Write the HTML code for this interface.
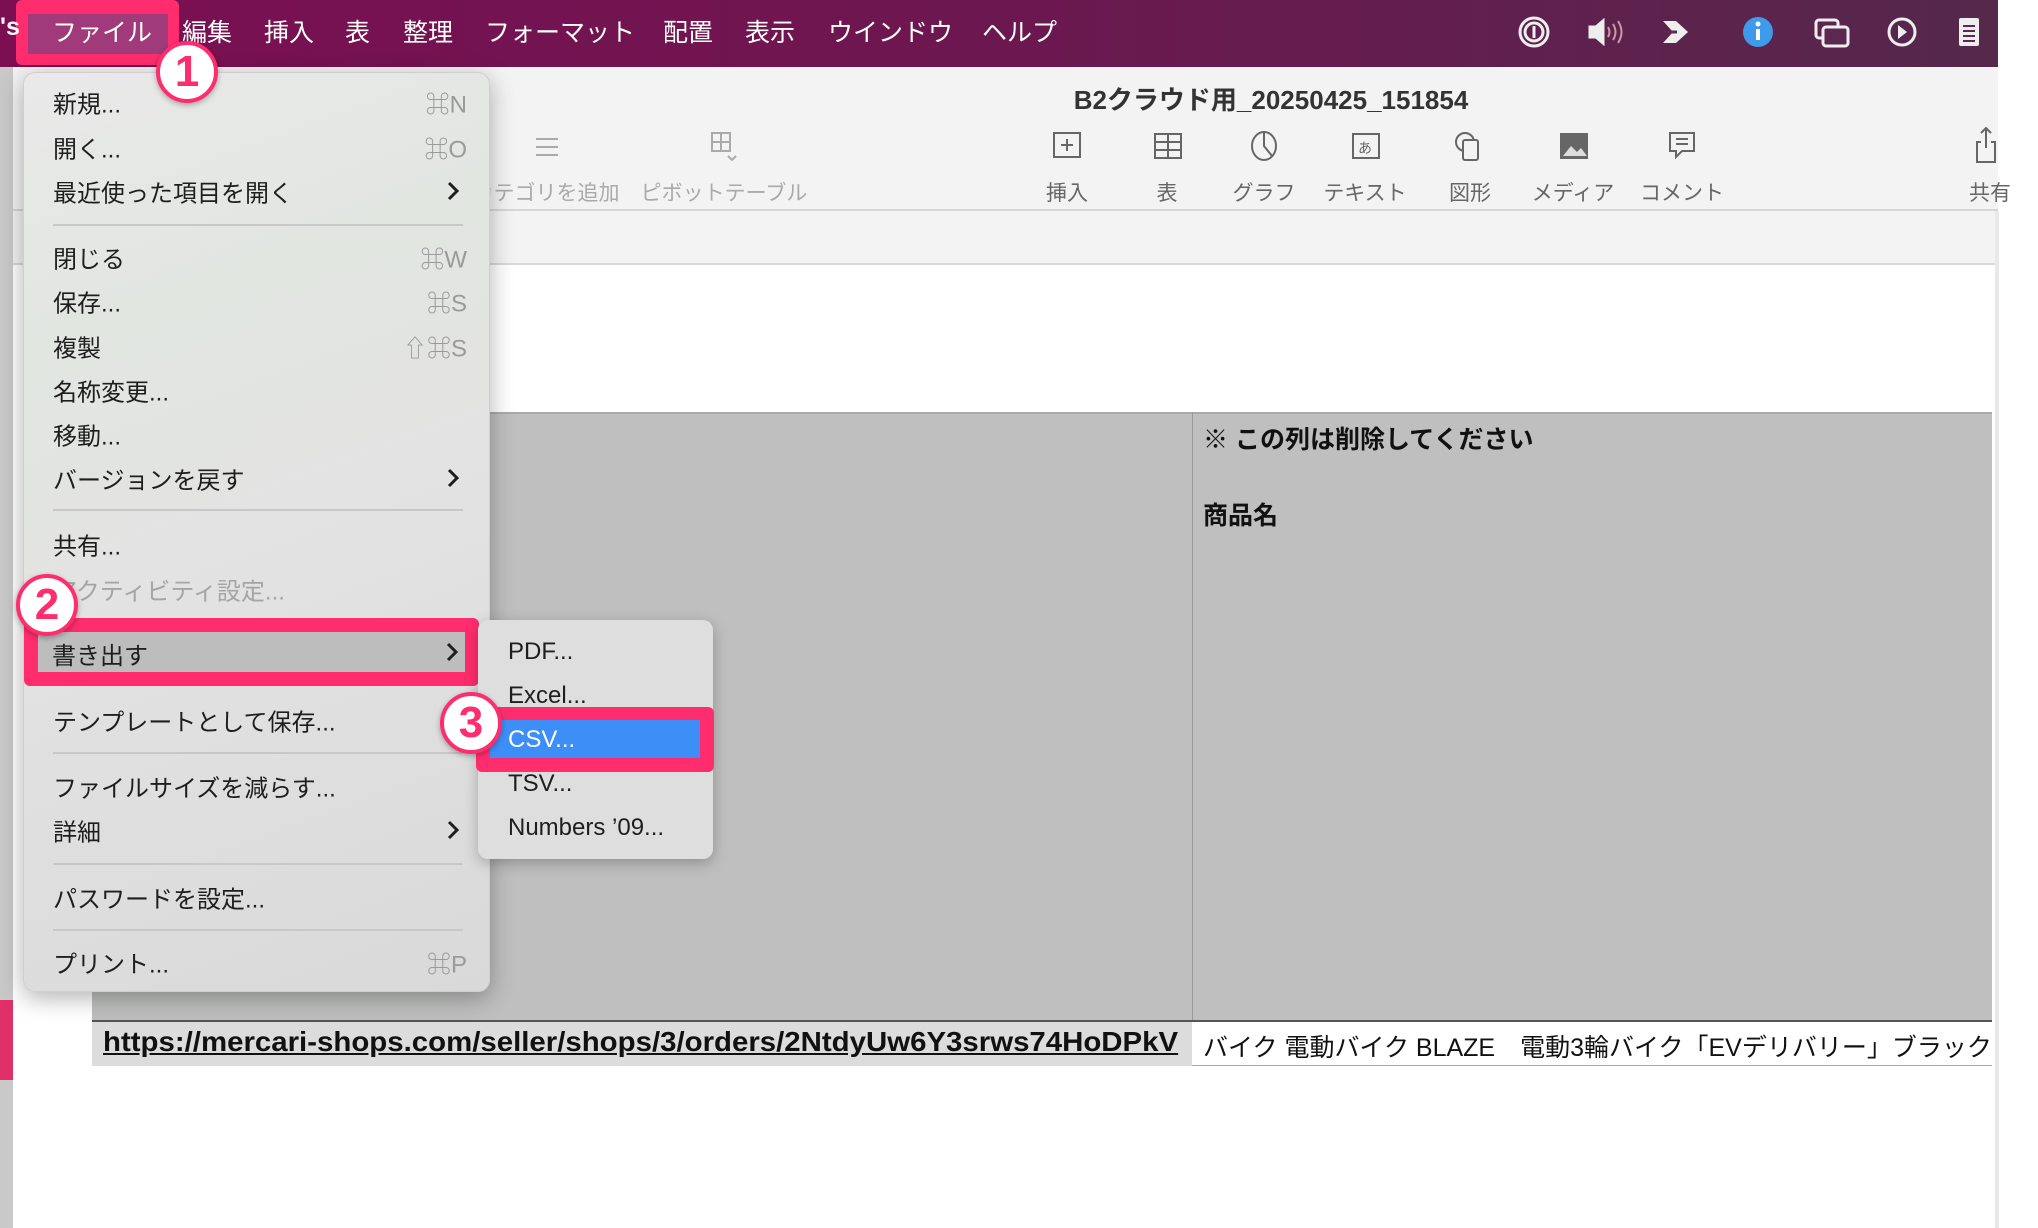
<!DOCTYPE html>
<html><head><meta charset="utf-8"><style>
*{margin:0;padding:0;box-sizing:border-box}
body{width:2038px;height:1228px;position:relative;overflow:hidden;background:#fff;font-family:"Liberation Sans","Noto Sans CJK JP",sans-serif}
.a{position:absolute}
.mb{left:0;top:0;width:1998px;height:67px;background:linear-gradient(90deg,#7b0f52 0%,#6e1650 45%,#55284c 100%)}
.mi{position:absolute;top:13px;color:#fff;font-size:25px;white-space:nowrap}
.win{left:13px;top:67px;width:1985px;height:1161px;background:#fff}
.menu{left:23px;top:72px;width:467px;height:920px;background:linear-gradient(160deg,#e9e9e9 0%,#e2e6e1 25%,#e3e3e3 50%,#d9d9d9 100%);border-radius:12px;box-shadow:0 6px 24px rgba(0,0,0,.3);border:1px solid #cfcfcf}
.it{position:absolute;left:29px;font-size:24px;color:#1e1e1e;white-space:nowrap;transform:translateY(-50%)}
.sc{position:absolute;right:22px;width:140px;text-align:right;font-size:24px;color:#9a9a9a;transform:translateY(-50%)}
.sep{position:absolute;left:29px;width:410px;height:2px;background:#c8c8c8}
.chev{position:absolute;left:422px;width:14px;height:22px;transform:translateY(-50%)}
.circ{position:absolute;width:62px;height:62px;border-radius:50%;background:#fff;border:4px solid #ff2d6e;color:#ff2d6e;font-weight:bold;font-size:44px;text-align:center;line-height:54px;box-shadow:0 2px 6px rgba(0,0,0,.3)}
.tb{position:absolute;font-size:21px;color:#666;transform:translateX(-50%);white-space:nowrap}
</style></head><body>
<svg width="0" height="0" style="position:absolute"><defs><symbol id="cv" viewBox="0 0 14 22"><path d="M3 3l8 8-8 8" fill="none" stroke="#1e1e1e" stroke-width="3"/></symbol></defs></svg>
<div class="a" style="left:0;top:67px;width:13px;height:1161px;background:#c9c9c9"></div>
<div class="a" style="left:0;top:1000px;width:13px;height:80px;background:#e0306a"></div>
<div class="a mb"></div>
<div class="a" style="left:16px;top:0;width:163px;height:65px;background:#ff2d6e;border-radius:6px"></div>
<div class="a" style="left:28px;top:14px;width:140px;height:40px;background:#a03a7a"></div>
<div class="mi" style="left:0;font-weight:bold">'s</div>
<div class="mi" style="left:52px">ファイル</div>
<div class="mi" style="left:182px">編集</div>
<div class="mi" style="left:264px">挿入</div>
<div class="mi" style="left:345px">表</div>
<div class="mi" style="left:403px">整理</div>
<div class="mi" style="left:485px">フォーマット</div>
<div class="mi" style="left:663px">配置</div>
<div class="mi" style="left:745px">表示</div>
<div class="mi" style="left:828px">ウインドウ</div>
<div class="mi" style="left:982px">ヘルプ</div>
<svg class="a" style="left:1515px;top:12px" width="470" height="42" viewBox="1515 12 470 42" fill="none" stroke="#eee" stroke-width="3">
<circle cx="1534" cy="32" r="14"/><circle cx="1534" cy="32" r="9"/><line x1="1534" y1="26" x2="1534" y2="38"/>
<path d="M1590 27h6l7-6v22l-7-6h-6z" fill="#eee"/><path d="M1608 27q3 5 0 10M1613 24q5 8 0 16M1618 21q7 11 0 22" stroke="#c9a" stroke-width="2"/>
<path d="M1663 21h13l12 11-12 11h-13l10-11z" fill="#eee" stroke="none"/><path d="M1663 32h14" stroke="#5e2650" stroke-width="3"/>
<circle cx="1758" cy="32" r="15" fill="#3d9be9" stroke="none"/><rect x="1756" y="29" width="4" height="11" fill="#fff" stroke="none"/><circle cx="1758" cy="24" r="2.5" fill="#fff" stroke="none"/>
<rect x="1816" y="20" width="22" height="18" rx="3"/><rect x="1823" y="27" width="25" height="19" rx="3" fill="#5c2850"/>
<circle cx="1902" cy="32" r="13"/><path d="M1898 25l9 7-9 7z" fill="#eee" stroke="none"/>
<rect x="1959" y="18" width="20" height="28" rx="2" fill="#eee" stroke="none"/><path d="M1963 26h12M1963 31h12M1963 36h12M1963 41h12" stroke="#5c2850" stroke-width="2"/>
</svg>
<div class="a win"></div>
<div class="a" style="left:13px;top:67px;width:1985px;height:144px;background:#f3f3f3;border-bottom:2px solid #d6d6d6"></div>
<div class="a" style="left:13px;top:211px;width:1985px;height:54px;background:#f3f3f3;border-bottom:2px solid #d8d8d8"></div>
<div class="a" style="left:1998px;top:67px;width:40px;height:1161px;background:#fff"></div>
<div class="a" style="left:1995px;top:211px;width:4px;height:1017px;background:#e8e8e8"></div>
<div class="a" style="left:1271px;top:80px;transform:translateX(-50%);font-size:26px;font-weight:bold;color:#333;white-space:nowrap">B2クラウド用_20250425_151854</div>
<svg class="a" style="left:500px;top:126px" width="1510" height="40" viewBox="500 126 1510 40" fill="none" stroke="#666" stroke-width="2">
<path d="M536 139h22M536 147h22M536 155h22" stroke="#aaa"/>
<rect x="712" y="133" width="18" height="18" stroke="#aaa"/><path d="M712 142h18M721 133v18M728 156l4 4 4-4" stroke="#aaa"/>
<rect x="1054" y="133" width="26" height="24"/><path d="M1061 145h12M1067 139v12"/>
<rect x="1155" y="134" width="26" height="24"/><path d="M1155 142h26M1155 150h26M1168 134v24"/>
<ellipse cx="1264" cy="146" rx="12" ry="14"/><path d="M1264 132v14l8 10"/>
<rect x="1353" y="134" width="26" height="24"/><text x="1358" y="153" font-size="14" fill="#666" stroke="none">あ</text>
<circle cx="1465" cy="142" r="9"/><rect x="1463" y="140" width="15" height="20" rx="2" fill="#f3f3f3"/>
<rect x="1561" y="134" width="26" height="24" fill="#666"/><path d="M1563 156l8-10 6 6 4-4 6 8z" fill="#ddd" stroke="none"/>
<path d="M1670 133h24v18h-12l-6 6v-6h-6z"/><path d="M1676 139h12M1676 144h12"/>
<path d="M1981 142h-4v20h18v-20h-4M1986 128v20M1981 133l5-5 5 5"/>
</svg>
<div class="tb" style="left:546px;top:177px;color:#aaa">カテゴリを追加</div>
<div class="tb" style="left:724px;top:177px;color:#aaa">ピボットテーブル</div>
<div class="tb" style="left:1067px;top:177px">挿入</div>
<div class="tb" style="left:1167px;top:177px">表</div>
<div class="tb" style="left:1264px;top:177px">グラフ</div>
<div class="tb" style="left:1365px;top:177px">テキスト</div>
<div class="tb" style="left:1470px;top:177px">図形</div>
<div class="tb" style="left:1573px;top:177px">メディア</div>
<div class="tb" style="left:1682px;top:177px">コメント</div>
<div class="tb" style="left:1990px;top:177px">共有</div>
<div class="a" style="left:92px;top:412px;width:1900px;height:609px;background:#bebfbe;border-top:2px solid #aaa"></div>
<div class="a" style="left:1192px;top:412px;width:1px;height:654px;background:#999"></div>
<div class="a" style="left:1203px;top:420px;font-size:25px;font-weight:bold;color:#111">※ この列は削除してください</div>
<div class="a" style="left:1203px;top:496px;font-size:25px;font-weight:bold;color:#111">商品名</div>
<div class="a" style="left:92px;top:1020px;width:1900px;height:46px;border-top:2px solid #555;border-bottom:1px solid #aaa;background:#fff"></div>
<div class="a" style="left:92px;top:1022px;width:1100px;height:44px;background:#dcdcdc"></div>
<div class="a" style="left:103px;top:1026px;font-size:28px;font-weight:bold;color:#111;text-decoration:underline;white-space:nowrap;transform:scaleX(1.05);transform-origin:0 0">https://mercari-shops.com/seller/shops/3/orders/2NtdyUw6Y3srws74HoDPkV</div>
<div class="a" style="left:1203px;top:1028px;font-size:25px;color:#111;white-space:nowrap">バイク 電動バイク BLAZE　電動3輪バイク「EVデリバリー」ブラック</div>

<div class="a menu">
<div class="it" style="top:29px">新規...</div><div class="sc" style="top:29px">⌘N</div>
<div class="it" style="top:74px">開く...</div><div class="sc" style="top:74px">⌘O</div>
<div class="it" style="top:118px">最近使った項目を開く</div><svg class="chev" style="top:118px"><use href="#cv"/></svg>
<div class="sep" style="top:151px"></div>
<div class="it" style="top:184px">閉じる</div><div class="sc" style="top:184px">⌘W</div>
<div class="it" style="top:228px">保存...</div><div class="sc" style="top:228px">⌘S</div>
<div class="it" style="top:273px">複製</div><div class="sc" style="top:273px">⇧⌘S</div>
<div class="it" style="top:317px">名称変更...</div>
<div class="it" style="top:361px">移動...</div>
<div class="it" style="top:405px">バージョンを戻す</div><svg class="chev" style="top:405px"><use href="#cv"/></svg>
<div class="sep" style="top:436px"></div>
<div class="it" style="top:471px">共有...</div>
<div class="it" style="top:516px;color:#a5a5a5">アクティビティ設定...</div>
<div class="it" style="top:647px">テンプレートとして保存...</div>
<div class="sep" style="top:679px"></div>
<div class="it" style="top:713px">ファイルサイズを減らす...</div>
<div class="it" style="top:757px">詳細</div><svg class="chev" style="top:757px"><use href="#cv"/></svg>
<div class="sep" style="top:790px"></div>
<div class="it" style="top:824px">パスワードを設定...</div>
<div class="sep" style="top:856px"></div>
<div class="it" style="top:889px">プリント...</div><div class="sc" style="top:889px">⌘P</div>
</div>
<div class="a" style="left:24px;top:618px;width:455px;height:68px;background:#ff2d6e;border-radius:6px"></div>
<div class="a" style="left:38px;top:632px;width:427px;height:40px;background:#bdbdbd"></div>
<div class="a" style="left:52px;top:636px;font-size:24px;color:#1e1e1e">書き出す</div>
<svg class="a" style="left:445px;top:641px" width="14" height="22"><use href="#cv"/></svg>

<div class="a" style="left:478px;top:620px;width:235px;height:239px;background:#dedede;border-radius:10px;box-shadow:0 4px 14px rgba(0,0,0,.25)"></div>
<div class="a" style="left:508px;top:638px;font-size:24px;color:#1e1e1e">PDF...</div>
<div class="a" style="left:508px;top:682px;font-size:24px;color:#1e1e1e">Excel...</div>
<div class="a" style="left:476px;top:707px;width:238px;height:65px;background:#ff2d6e;border-radius:6px"></div>
<div class="a" style="left:490px;top:720px;width:210px;height:38px;background:#3e8ef7"></div>
<div class="a" style="left:508px;top:726px;font-size:24px;color:#fff">CSV...</div>
<div class="a" style="left:508px;top:770px;font-size:24px;color:#1e1e1e">TSV...</div>
<div class="a" style="left:508px;top:814px;font-size:24px;color:#1e1e1e">Numbers ’09...</div>

<div class="circ" style="left:156px;top:41px">1</div>
<div class="circ" style="left:16px;top:574px">2</div>
<div class="circ" style="left:440px;top:692px">3</div>
</body></html>
